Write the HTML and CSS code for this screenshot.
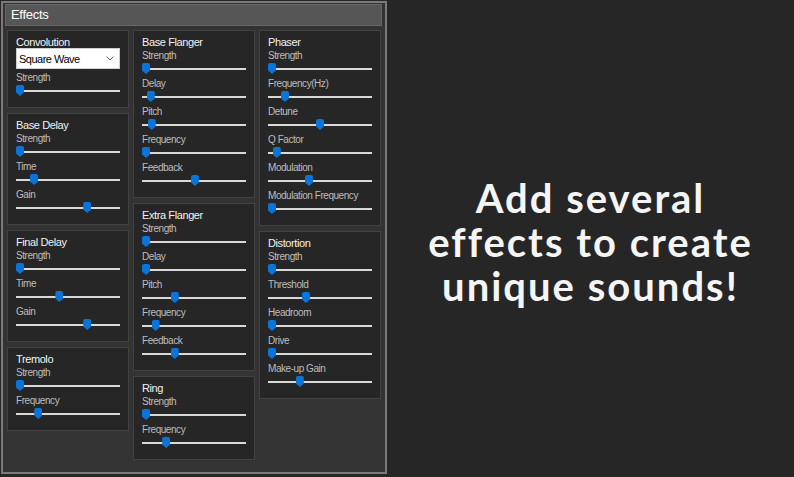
FILE: index.html
```html
<!DOCTYPE html>
<html>
<head>
<meta charset="utf-8">
<link rel="stylesheet" href="styles.css">
</head>
<body>
<div class="window">
  <div class="titlebar">Effects</div>
  <div class="columns">
    <div class="col">
      <div class="panel">
        <div class="ptitle">Convolution</div>
        <div class="select"><span>Square Wave</span><svg class="chev" width="8" height="5" viewBox="0 0 8 5"><path d="M0.5 0.5 L4 4 L7.5 0.5" fill="none" stroke="#666" stroke-width="1"/></svg></div>
        <div class="label after-select">Strength</div>
        <div class="slider"><span class="thumb" style="--v:0"></span></div>
      </div>
      <div class="panel">
        <div class="ptitle">Base Delay</div>
        <div class="label">Strength</div>
        <div class="slider"><span class="thumb" style="--v:0"></span></div>
        <div class="label">Time</div>
        <div class="slider"><span class="thumb" style="--v:.146"></span></div>
        <div class="label">Gain</div>
        <div class="slider"><span class="thumb" style="--v:.70"></span></div>
      </div>
      <div class="panel">
        <div class="ptitle">Final Delay</div>
        <div class="label">Strength</div>
        <div class="slider"><span class="thumb" style="--v:0"></span></div>
        <div class="label">Time</div>
        <div class="slider"><span class="thumb" style="--v:.41"></span></div>
        <div class="label">Gain</div>
        <div class="slider"><span class="thumb" style="--v:.70"></span></div>
      </div>
      <div class="panel">
        <div class="ptitle">Tremolo</div>
        <div class="label">Strength</div>
        <div class="slider"><span class="thumb" style="--v:0"></span></div>
        <div class="label">Frequency</div>
        <div class="slider"><span class="thumb" style="--v:.19"></span></div>
      </div>
    </div>
    <div class="col">
      <div class="panel">
        <div class="ptitle">Base Flanger</div>
        <div class="label">Strength</div>
        <div class="slider"><span class="thumb" style="--v:0"></span></div>
        <div class="label">Delay</div>
        <div class="slider"><span class="thumb" style="--v:.05"></span></div>
        <div class="label">Pitch</div>
        <div class="slider"><span class="thumb" style="--v:.06"></span></div>
        <div class="label">Frequency</div>
        <div class="slider"><span class="thumb" style="--v:0"></span></div>
        <div class="label">Feedback</div>
        <div class="slider"><span class="thumb" style="--v:.51"></span></div>
      </div>
      <div class="panel">
        <div class="ptitle">Extra Flanger</div>
        <div class="label">Strength</div>
        <div class="slider"><span class="thumb" style="--v:0"></span></div>
        <div class="label">Delay</div>
        <div class="slider"><span class="thumb" style="--v:0"></span></div>
        <div class="label">Pitch</div>
        <div class="slider"><span class="thumb" style="--v:.30"></span></div>
        <div class="label">Frequency</div>
        <div class="slider"><span class="thumb" style="--v:.10"></span></div>
        <div class="label">Feedback</div>
        <div class="slider"><span class="thumb" style="--v:.30"></span></div>
      </div>
      <div class="panel">
        <div class="ptitle">Ring</div>
        <div class="label">Strength</div>
        <div class="slider"><span class="thumb" style="--v:0"></span></div>
        <div class="label">Frequency</div>
        <div class="slider"><span class="thumb" style="--v:.21"></span></div>
      </div>
    </div>
    <div class="col">
      <div class="panel">
        <div class="ptitle">Phaser</div>
        <div class="label">Strength</div>
        <div class="slider"><span class="thumb" style="--v:0"></span></div>
        <div class="label">Frequency(Hz)</div>
        <div class="slider"><span class="thumb" style="--v:.135"></span></div>
        <div class="label">Detune</div>
        <div class="slider"><span class="thumb" style="--v:.5"></span></div>
        <div class="label">Q Factor</div>
        <div class="slider"><span class="thumb" style="--v:.05"></span></div>
        <div class="label">Modulation</div>
        <div class="slider"><span class="thumb" style="--v:.385"></span></div>
        <div class="label">Modulation Frequency</div>
        <div class="slider"><span class="thumb" style="--v:0"></span></div>
      </div>
      <div class="panel">
        <div class="ptitle">Distortion</div>
        <div class="label">Strength</div>
        <div class="slider"><span class="thumb" style="--v:0"></span></div>
        <div class="label">Threshold</div>
        <div class="slider"><span class="thumb" style="--v:.354"></span></div>
        <div class="label">Headroom</div>
        <div class="slider"><span class="thumb" style="--v:0"></span></div>
        <div class="label">Drive</div>
        <div class="slider"><span class="thumb" style="--v:0"></span></div>
        <div class="label">Make-up Gain</div>
        <div class="slider"><span class="thumb" style="--v:.29"></span></div>
      </div>
    </div>
  </div>
</div>
<div class="promo">
  <p class="promo-text">Add several<br>effects to create<br>unique sounds!</p>
</div>
</body>
</html>
```
FILE: styles.css
```css
html, body {
  margin: 0;
  padding: 0;
  height: 100%;
}
body {
  background: #262626;
  display: flex;
  font-family: "Liberation Sans", Arial, sans-serif;
}
.window {
  box-sizing: border-box;
  width: 386px;
  height: 473px;
  margin: 1px 0 0 1px;
  border: 2px solid #7a7a7a;
  background: #333333;
  padding: 1px 3px 0 2px;
  flex: none;
}
.titlebar {
  box-sizing: border-box;
  height: 22px;
  border: 1px solid #666666;
  background: #565656;
  color: #ffffff;
  font-size: 13px;
  letter-spacing: -0.3px;
  line-height: 20px;
  padding-left: 5px;
}
.columns {
  display: flex;
  align-items: flex-start;
  gap: 4px;
  margin-top: 4px;
  padding-left: 2px;
}
.col {
  width: 122px;
  display: flex;
  flex-direction: column;
  gap: 5px;
}
.panel {
  box-sizing: border-box;
  border: 1px solid #424242;
  background: #262626;
  padding: 4px 8px 8px 8px;
}
.ptitle {
  color: #f2f2f2;
  font-size: 11px;
  letter-spacing: -0.4px;
  line-height: 14px;
}
.label {
  color: #bdbdbd;
  font-size: 10px;
  letter-spacing: -0.45px;
  line-height: 14px;
}
.after-select {
  margin-top: 2px;
}
.select {
  box-sizing: border-box;
  height: 21px;
  margin-top: -1px;
  background: #ffffff;
  border: 1px solid #cfcfcf;
  display: flex;
  align-items: center;
  justify-content: space-between;
  padding: 0 5px 0 2px;
  color: #000000;
  font-size: 11px;
  letter-spacing: -0.5px;
}
.slider {
  position: relative;
  height: 10px;
  margin-bottom: 4px;
}
.slider::before {
  content: "";
  position: absolute;
  left: 0;
  right: 0;
  top: 5px;
  height: 2px;
  background: #d9d9d9;
}
.thumb {
  position: absolute;
  top: 0;
  left: calc((100% - 8px) * var(--v));
  width: 8px;
  height: 11px;
  background: #0a74d9;
  border-radius: 2px 2px 0 0;
  clip-path: polygon(0 0, 100% 0, 100% 68%, 50% 100%, 0 68%);
}
.promo {
  flex: 1;
  display: flex;
  align-items: center;
  justify-content: center;
  padding-top: 6px;
}
.promo-text {
  margin: 0;
  color: #f5f5f5;
  font-family: Lato, "Noto Sans", sans-serif;
  font-weight: 700;
  font-size: 40px;
  line-height: 44px;
  text-align: center;
  letter-spacing: 2px;
}
```
